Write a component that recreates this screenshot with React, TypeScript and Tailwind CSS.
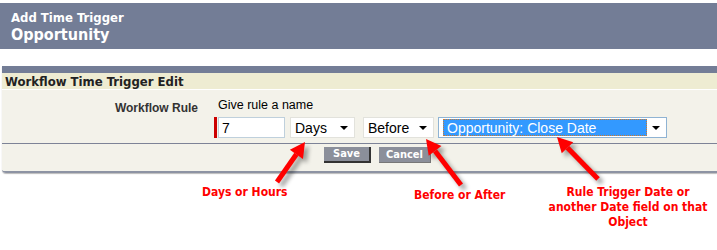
const verdana = "font-['Tahoma','DejaVu_Sans_Condensed','DejaVu_Sans',sans-serif]";
const arial = "font-['Liberation_Sans',Arial,sans-serif]";

function FakeSelect({
  label,
  width,
  focused = false,
}: {
  label: string;
  width: string;
  focused?: boolean;
}) {
  return (
    <div
      className={`flex h-[21px] items-center justify-between bg-white pl-[4px] pr-[6px] ${width} ${
        focused ? "border border-[#8fb3d3]" : "border border-[#e2e2dc]"
      }`}
    >
      {focused ? (
        <span className="flex h-[17px] w-[204px] items-center border border-dotted border-[#d07a2a] bg-[#3399ff] pl-[3px] text-[14px] leading-none text-white">
          {label}
        </span>
      ) : (
        <span className="text-[14px] leading-none text-black">{label}</span>
      )}
      <span className="h-0 w-0 border-x-[4px] border-t-[4px] border-x-transparent border-t-black" />
    </div>
  );
}

function Arrow({ x1, y1, x2, y2 }: { x1: number; y1: number; x2: number; y2: number }) {
  const dx = x2 - x1;
  const dy = y2 - y1;
  const len = Math.hypot(dx, dy);
  const ux = dx / len;
  const uy = dy / len;
  const head = 15;
  const half = 8;
  const bx = x2 - ux * head;
  const by = y2 - uy * head;
  const pts = `${x2},${y2} ${bx - uy * half},${by + ux * half} ${bx + uy * half},${by - ux * half}`;
  return (
    <g>
      <g transform="translate(4,4)" opacity="0.35" filter="url(#blur)">
        <line x1={x1} y1={y1} x2={bx} y2={by} stroke="#000" strokeWidth="5" />
        <polygon points={pts} fill="#000" />
      </g>
      <line x1={x1} y1={y1} x2={bx} y2={by} stroke="#ff0000" strokeWidth="5" />
      <polygon points={pts} fill="#ff0000" />
    </g>
  );
}

export default function App() {
  return (
    <div className={`relative h-[250px] w-[717px] overflow-hidden bg-white ${arial}`}>
      {/* page title */}
      <div className={`mt-[3px] h-[46px] bg-[#737d96] pl-[11px] pt-[7px] text-white ${verdana}`}>
        <div className="text-[13px] font-bold leading-[15px]">Add Time Trigger</div>
        <div className="text-[16px] font-bold leading-[19px]">Opportunity</div>
      </div>

      {/* edit block */}
      <div className="ml-[2px] mt-[17px] overflow-hidden rounded-bl-[4px] border-t-[7px] border-b-[2px] border-[#737d96] border-b-[#8d93a3] shadow-[0_1px_1px_#bbb]">
        <div className={`h-[17px] border-b border-white bg-[#eeecd2] pl-[3px] text-[13px] font-bold leading-[17px] text-[#222] ${verdana}`}>
          Workflow Time Trigger Edit
        </div>
        <div className="flex h-[53px] bg-[#f3f2ea] pt-[8px]">
          <div className="w-[196px] pt-[3px] text-right text-[12px] font-bold leading-[14px] text-[#333]">
            Workflow Rule
          </div>
          <div className="ml-[16px] flex flex-col">
            <div className="pl-[4px] text-[12.5px] leading-[14px] text-black">Give rule a name</div>
            <div className="mt-[5px] flex items-center">
              <div className="h-[21px] w-[3px] bg-[#c00]" />
              <div className="ml-[1px] flex h-[21px] w-[67px] items-center border border-[#bfd0dc] bg-white pl-[3px] text-[14px] leading-none">
                7
              </div>
              <div className="ml-[5px]">
                <FakeSelect label="Days" width="w-[65px]" />
              </div>
              <div className="ml-[8px]">
                <FakeSelect label="Before" width="w-[71px]" />
              </div>
              <div className="ml-[4px]">
                <FakeSelect label="Opportunity: Close Date" width="w-[229px]" focused />
              </div>
            </div>
          </div>
        </div>
        <div className="h-[1px] bg-[#7d8397]" />
        <div className={`flex h-[27px] items-start bg-[#f3f2ea] pl-[322px] pt-[3px] ${verdana}`}>
          <button className="h-[16px] w-[47px] border-b-2 border-r-2 border-[#333] bg-[#8b8f9a] text-[11px] font-bold leading-[14px] text-white">
            Save
          </button>
          <button className="ml-[8px] h-[16px] w-[52px] border-b border-r border-[#777] bg-[#8b8f9a] text-[11px] font-bold leading-[14px] text-white">
            Cancel
          </button>
        </div>
      </div>

      {/* annotations */}
      <div className={`absolute left-[202px] top-[185px] text-[12px] font-bold leading-[15px] text-[#ff0000] ${verdana}`}>
        Days or Hours
      </div>
      <div className={`absolute left-[414px] top-[188px] text-[12px] font-bold leading-[15px] text-[#ff0000] ${verdana}`}>
        Before or After
      </div>
      <div className={`absolute left-[548px] top-[185px] w-[160px] text-center text-[12px] font-bold leading-[15px] text-[#ff0000] ${verdana}`}>
        Rule Trigger Date or
        <br />
        another Date field on that
        <br />
        Object
      </div>

      <svg className="pointer-events-none absolute left-0 top-0" width="717" height="250">
        <defs>
          <filter id="blur" x="-20%" y="-20%" width="140%" height="140%">
            <feGaussianBlur stdDeviation="2" />
          </filter>
        </defs>
        <Arrow x1={277} y1={182} x2={305} y2={142} />
        <Arrow x1={461} y1={185} x2={426} y2={139} />
        <Arrow x1={598} y1={179} x2={557} y2={137} />
      </svg>
    </div>
  );
}
